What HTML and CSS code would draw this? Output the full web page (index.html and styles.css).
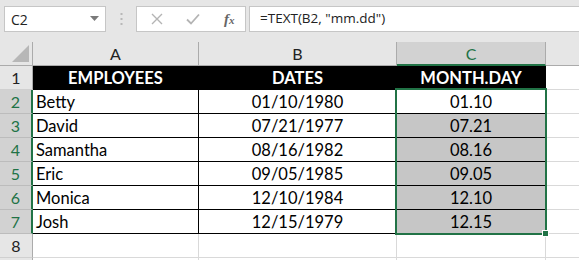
FILE: index.html
```html
<!DOCTYPE html>
<html>
<head>
<meta charset="utf-8">
<link rel="stylesheet" href="styles.css">
</head>
<body>
<div class="toolbar">
  <div class="namebox">
    <span class="nb-text">C2</span>
    <svg class="dd" width="9" height="5" viewBox="0 0 9 5"><path d="M0 0H9L4.5 5Z" fill="#7a7a7a"/></svg>
  </div>
  <div class="sep">
    <svg width="3" height="14" viewBox="0 0 3 14"><rect x="0.5" y="0" width="2" height="2" fill="#b8b8b8"/><rect x="0.5" y="5" width="2" height="2" fill="#b8b8b8"/><rect x="0.5" y="10" width="2" height="2" fill="#b8b8b8"/></svg>
  </div>
  <div class="fxbtns">
    <svg class="ico" width="12" height="12" viewBox="0 0 12 12"><path d="M1 1L11 11M11 1L1 11" stroke="#b4b4b4" stroke-width="1.4" fill="none"/></svg>
    <svg class="ico" width="14" height="12" viewBox="0 0 14 12"><path d="M1 6.5L5 10.5L13 1.5" stroke="#b4b4b4" stroke-width="1.8" fill="none"/></svg>
    <span class="fx">f<span class="fxx">x</span></span>
  </div>
  <div class="formula">=TEXT(B2, "mm.dd")</div>
</div>

<div class="sheet">
  <div class="corner"><svg width="17" height="17" viewBox="0 0 17 17"><path d="M17 0V17H0Z" fill="#b7b7b7"/></svg></div>
  <div class="colh">A</div>
  <div class="colh">B</div>
  <div class="colh colh-sel">C</div>
  <div class="colh colh-d"></div>

  <div class="rowh">1</div>
  <div class="c head">EMPLOYEES</div>
  <div class="c head">DATES</div>
  <div class="c head">MONTH.DAY</div>
  <div class="g"></div>

  <div class="rowh rowh-sel">2</div>
  <div class="c name">Betty</div>
  <div class="c ctr">01/10/1980</div>
  <div class="c ctr active">01.10</div>
  <div class="g"></div>

  <div class="rowh rowh-sel">3</div>
  <div class="c name">David</div>
  <div class="c ctr">07/21/1977</div>
  <div class="c ctr shade">07.21</div>
  <div class="g"></div>

  <div class="rowh rowh-sel">4</div>
  <div class="c name">Samantha</div>
  <div class="c ctr">08/16/1982</div>
  <div class="c ctr shade">08.16</div>
  <div class="g"></div>

  <div class="rowh rowh-sel">5</div>
  <div class="c name">Eric</div>
  <div class="c ctr">09/05/1985</div>
  <div class="c ctr shade">09.05</div>
  <div class="g"></div>

  <div class="rowh rowh-sel">6</div>
  <div class="c name">Monica</div>
  <div class="c ctr">12/10/1984</div>
  <div class="c ctr shade">12.10</div>
  <div class="g"></div>

  <div class="rowh rowh-sel">7</div>
  <div class="c name">Josh</div>
  <div class="c ctr">12/15/1979</div>
  <div class="c ctr shade">12.15</div>
  <div class="g"></div>

  <div class="rowh">8</div>
  <div class="g gr"></div>
  <div class="g gr"></div>
  <div class="g gr"></div>
  <div class="g"></div>

  <div class="rowh rowh-last"></div>
  <div class="g gr rowh-last"></div>
  <div class="g gr rowh-last"></div>
  <div class="g gr rowh-last"></div>
  <div class="g rowh-last"></div>

  <div class="selection"></div>
  <div class="handle"></div>
</div>
</body>
</html>
```

FILE: styles.css
```css
* { box-sizing: border-box; }
html, body { margin: 0; padding: 0; }
body {
  width: 579px;
  height: 260px;
  overflow: hidden;
  background: #ffffff;
  font-family: Lato, "Liberation Sans", sans-serif;
}

.toolbar {
  height: 42px;
  background: #e6e6e6;
  display: flex;
  align-items: flex-start;
  padding: 6px 0 0 4px;
}
.namebox {
  width: 102px;
  height: 26px;
  background: #fff;
  border: 1px solid #c6c6c6;
  display: flex;
  align-items: center;
  justify-content: space-between;
  padding: 0 6px 0 6px;
}
.nb-text {
  font-family: "Open Sans", sans-serif;
  font-size: 14px;
  color: #222;
}
.dd { margin-top: -1px; }
.sep {
  width: 30px;
  height: 26px;
  display: flex;
  align-items: center;
  justify-content: center;
  padding-top: 2px;
}
.fxbtns {
  width: 110px;
  height: 26px;
  background: #fff;
  border: 1px solid #c6c6c6;
  display: flex;
  align-items: center;
  padding-left: 14px;
}
.fxbtns .ico:first-child { margin-right: 23px; }
.fxbtns .ico:nth-child(2) { margin-right: 24px; }
.fx {
  font-family: "Liberation Serif", serif;
  font-style: italic;
  font-size: 15px;
  color: #666;
  font-weight: bold;
}
.fxx { font-size: 11px; }
.formula {
  flex: 1;
  margin-left: 3px;
  height: 26px;
  background: #fff;
  border: 1px solid #c6c6c6;
  border-right: none;
  font-family: "Open Sans", sans-serif;
  font-size: 13.5px;
  color: #222;
  padding-left: 10px;
  line-height: 23px;
}

.sheet {
  position: relative;
  display: grid;
  grid-template-columns: 33px 166px 198px 149px 1fr;
  grid-template-rows: repeat(9, 24px) 2px;
  height: 218px;
  overflow: hidden;
}
.sheet > div {
  display: flex;
  align-items: center;
}
.corner {
  background: #e6e6e6;
  border-right: 1px solid #ababab;
  border-bottom: 1px solid #ababab;
  justify-content: flex-end;
  align-items: flex-end !important;
  padding: 0 3px 3px 0;
}
.corner svg { display: block; }
.colh {
  background: #e6e6e6;
  border-right: 1px solid #ababab;
  border-bottom: 1px solid #ababab;
  justify-content: center;
  font-size: 16px;
  color: #222;
}
.colh-sel {
  background: #d2d2d2;
  color: #217346;
  border-bottom: 2px solid #217346;
}
.colh-d { border-right: none; }

.rowh {
  background: #e6e6e6;
  border-right: 1px solid #ababab;
  border-bottom: 1px solid #d0d0d0;
  justify-content: center;
  font-size: 16px;
  color: #222;
}
.rowh-sel {
  background: #d2d2d2;
  color: #217346;
  border-right: 2px solid #217346;
  border-bottom: 1px solid #bcbcbc;
}
.rowh-last { border-bottom: none !important; }

.c {
  border-right: 1px solid #000;
  border-bottom: 1px solid #000;
  font-size: 16.5px;
  color: #000;
  white-space: nowrap;
}
.head {
  background: #000;
  color: #fff;
  font-weight: bold;
  justify-content: center;
}
.name { padding-left: 3px; }
.ctr { justify-content: center; }
.shade { background: #c6c6c6; }

.g {
  border-bottom: 1px solid #d9d9d9;
}
.gr { border-right: 1px solid #d9d9d9; }

.selection {
  position: absolute;
  left: 395px;
  top: 46px;
  width: 152px;
  height: 147px;
  border: 2px solid #217346;
  pointer-events: none;
}
.handle {
  position: absolute;
  left: 542px;
  top: 188px;
  width: 7px;
  height: 7px;
  background: #217346;
  border: 1px solid #fff;
}
```
